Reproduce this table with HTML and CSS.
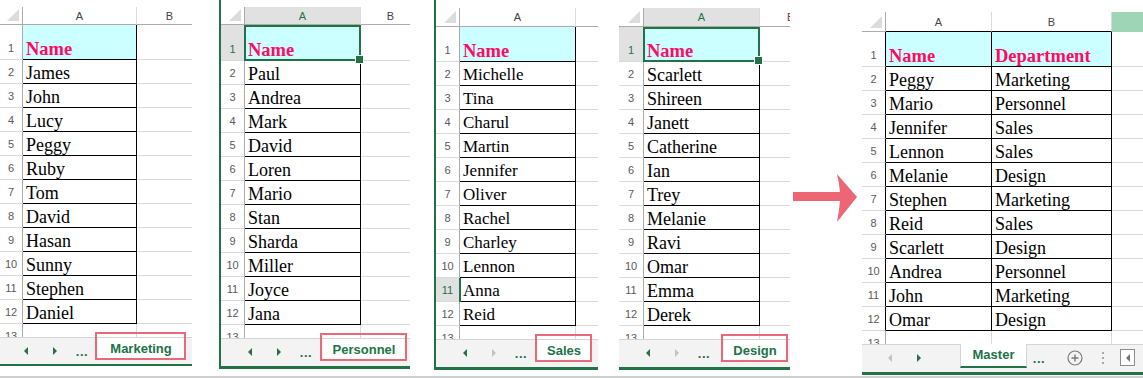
FILE: index.html
```html
<!DOCTYPE html>
<html>
<head>
<meta charset="utf-8">
<link rel="stylesheet" href="styles.css">
</head>
<body>
<div class="stage">

  <div class="sheet p1">
    <div class="row hdr"><div class="rh corner"><span class="tri"></span></div><div class="cell ca">A</div><div class="cell cb bl">B</div></div>
    <div class="row r1"><div class="rh">1</div><div class="cell ca dat">Name</div><div class="cell cb"></div></div>
    <div class="row"><div class="rh">2</div><div class="cell ca dat">James</div><div class="cell cb"></div></div>
    <div class="row"><div class="rh">3</div><div class="cell ca dat">John</div><div class="cell cb"></div></div>
    <div class="row"><div class="rh">4</div><div class="cell ca dat">Lucy</div><div class="cell cb"></div></div>
    <div class="row"><div class="rh">5</div><div class="cell ca dat">Peggy</div><div class="cell cb"></div></div>
    <div class="row"><div class="rh">6</div><div class="cell ca dat">Ruby</div><div class="cell cb"></div></div>
    <div class="row"><div class="rh">7</div><div class="cell ca dat">Tom</div><div class="cell cb"></div></div>
    <div class="row"><div class="rh">8</div><div class="cell ca dat">David</div><div class="cell cb"></div></div>
    <div class="row"><div class="rh">9</div><div class="cell ca dat">Hasan</div><div class="cell cb"></div></div>
    <div class="row"><div class="rh">10</div><div class="cell ca dat">Sunny</div><div class="cell cb"></div></div>
    <div class="row"><div class="rh">11</div><div class="cell ca dat">Stephen</div><div class="cell cb"></div></div>
    <div class="row"><div class="rh">12</div><div class="cell ca dat">Daniel</div><div class="cell cb"></div></div>
    <div class="row r13"><div class="rh">13</div><div class="cell ca"></div><div class="cell cb"></div></div>
    <div class="tabs">
      <span class="nav"><i class="tl"></i></span>
      <span class="nav"><i class="tr"></i></span>
      <span class="dots">...</span>
      <span class="tab hl t-mkt">Marketing</span>
    </div>
  </div>

  <div class="sheet p2">
    <div class="row hdr"><div class="rh corner"><span class="tri"></span></div><div class="cell ca sel">A</div><div class="cell cb bl">B</div></div>
    <div class="row r1"><div class="rh sel">1</div><div class="cell ca dat active">Name</div><div class="cell cb"></div></div>
    <div class="row"><div class="rh">2</div><div class="cell ca dat">Paul</div><div class="cell cb"></div></div>
    <div class="row"><div class="rh">3</div><div class="cell ca dat">Andrea</div><div class="cell cb"></div></div>
    <div class="row"><div class="rh">4</div><div class="cell ca dat">Mark</div><div class="cell cb"></div></div>
    <div class="row"><div class="rh">5</div><div class="cell ca dat">David</div><div class="cell cb"></div></div>
    <div class="row"><div class="rh">6</div><div class="cell ca dat">Loren</div><div class="cell cb"></div></div>
    <div class="row"><div class="rh">7</div><div class="cell ca dat">Mario</div><div class="cell cb"></div></div>
    <div class="row"><div class="rh">8</div><div class="cell ca dat">Stan</div><div class="cell cb"></div></div>
    <div class="row"><div class="rh">9</div><div class="cell ca dat">Sharda</div><div class="cell cb"></div></div>
    <div class="row"><div class="rh">10</div><div class="cell ca dat">Miller</div><div class="cell cb"></div></div>
    <div class="row"><div class="rh">11</div><div class="cell ca dat">Joyce</div><div class="cell cb"></div></div>
    <div class="row"><div class="rh">12</div><div class="cell ca dat">Jana</div><div class="cell cb"></div></div>
    <div class="row r13"><div class="rh">13</div><div class="cell ca"></div><div class="cell cb"></div></div>
    <div class="tabs">
      <span class="nav"><i class="tl"></i></span>
      <span class="nav"><i class="tr"></i></span>
      <span class="dots">...</span>
      <span class="tab hl t-per">Personnel</span>
    </div>
  </div>

  <div class="sheet p3">
    <div class="row hdr"><div class="rh corner"><span class="tri"></span></div><div class="cell ca">A</div><div class="cell cb"></div></div>
    <div class="row r1"><div class="rh">1</div><div class="cell ca dat">Name</div><div class="cell cb"></div></div>
    <div class="row"><div class="rh">2</div><div class="cell ca dat">Michelle</div><div class="cell cb"></div></div>
    <div class="row"><div class="rh">3</div><div class="cell ca dat">Tina</div><div class="cell cb"></div></div>
    <div class="row"><div class="rh">4</div><div class="cell ca dat">Charul</div><div class="cell cb"></div></div>
    <div class="row"><div class="rh">5</div><div class="cell ca dat">Martin</div><div class="cell cb"></div></div>
    <div class="row"><div class="rh">6</div><div class="cell ca dat">Jennifer</div><div class="cell cb"></div></div>
    <div class="row"><div class="rh">7</div><div class="cell ca dat">Oliver</div><div class="cell cb"></div></div>
    <div class="row"><div class="rh">8</div><div class="cell ca dat">Rachel</div><div class="cell cb"></div></div>
    <div class="row"><div class="rh">9</div><div class="cell ca dat">Charley</div><div class="cell cb"></div></div>
    <div class="row"><div class="rh">10</div><div class="cell ca dat">Lennon</div><div class="cell cb"></div></div>
    <div class="row"><div class="rh sel">11</div><div class="cell ca dat edge">Anna</div><div class="cell cb"></div></div>
    <div class="row"><div class="rh">12</div><div class="cell ca dat">Reid</div><div class="cell cb"></div></div>
    <div class="row r13"><div class="rh">13</div><div class="cell ca"></div><div class="cell cb"></div></div>
    <div class="tabs">
      <span class="nav"><i class="tl"></i></span>
      <span class="nav"><i class="tr off"></i></span>
      <span class="dots">...</span>
      <span class="tab hl t-sal">Sales</span>
    </div>
  </div>

  <div class="sheet p4">
    <div class="row hdr"><div class="rh corner"><span class="tri"></span></div><div class="cell ca sel">A</div><div class="cell cb cut">B</div></div>
    <div class="row r1"><div class="rh sel">1</div><div class="cell ca dat active">Name</div><div class="cell cb"></div></div>
    <div class="row"><div class="rh">2</div><div class="cell ca dat">Scarlett</div><div class="cell cb"></div></div>
    <div class="row"><div class="rh">3</div><div class="cell ca dat">Shireen</div><div class="cell cb"></div></div>
    <div class="row"><div class="rh">4</div><div class="cell ca dat">Janett</div><div class="cell cb"></div></div>
    <div class="row"><div class="rh">5</div><div class="cell ca dat">Catherine</div><div class="cell cb"></div></div>
    <div class="row"><div class="rh">6</div><div class="cell ca dat">Ian</div><div class="cell cb"></div></div>
    <div class="row"><div class="rh">7</div><div class="cell ca dat">Trey</div><div class="cell cb"></div></div>
    <div class="row"><div class="rh">8</div><div class="cell ca dat">Melanie</div><div class="cell cb"></div></div>
    <div class="row"><div class="rh">9</div><div class="cell ca dat">Ravi</div><div class="cell cb"></div></div>
    <div class="row"><div class="rh">10</div><div class="cell ca dat">Omar</div><div class="cell cb"></div></div>
    <div class="row"><div class="rh">11</div><div class="cell ca dat">Emma</div><div class="cell cb"></div></div>
    <div class="row"><div class="rh">12</div><div class="cell ca dat">Derek</div><div class="cell cb"></div></div>
    <div class="row r13"><div class="rh">13</div><div class="cell ca"></div><div class="cell cb"></div></div>
    <div class="tabs">
      <span class="nav"><i class="tl"></i></span>
      <span class="nav"><i class="tr off"></i></span>
      <span class="dots">...</span>
      <span class="tab hl t-des">Design</span>
    </div>
  </div>

  <div class="arrow">
    <svg width="64" height="52" viewBox="0 0 64 52" aria-hidden="true">
      <path d="M0 20 H47 Q46 10 44 2 L64 25 L44 50 Q46 40 47 29 H0 Z" fill="#ec6676"/>
    </svg>
  </div>

  <div class="sheet p5">
    <div class="row hdr"><div class="rh corner"><span class="tri"></span></div><div class="cell ca">A</div><div class="cell cb">B</div><div class="cell cc"></div></div>
    <div class="row r1"><div class="rh">1</div><div class="cell ca dat">Name</div><div class="cell cb dat">Department</div><div class="cell cc"></div></div>
    <div class="row"><div class="rh">2</div><div class="cell ca dat">Peggy</div><div class="cell cb dat">Marketing</div><div class="cell cc"></div></div>
    <div class="row"><div class="rh">3</div><div class="cell ca dat">Mario</div><div class="cell cb dat">Personnel</div><div class="cell cc"></div></div>
    <div class="row"><div class="rh">4</div><div class="cell ca dat">Jennifer</div><div class="cell cb dat">Sales</div><div class="cell cc"></div></div>
    <div class="row"><div class="rh">5</div><div class="cell ca dat">Lennon</div><div class="cell cb dat">Sales</div><div class="cell cc"></div></div>
    <div class="row"><div class="rh">6</div><div class="cell ca dat">Melanie</div><div class="cell cb dat">Design</div><div class="cell cc"></div></div>
    <div class="row"><div class="rh">7</div><div class="cell ca dat">Stephen</div><div class="cell cb dat">Marketing</div><div class="cell cc"></div></div>
    <div class="row"><div class="rh">8</div><div class="cell ca dat">Reid</div><div class="cell cb dat">Sales</div><div class="cell cc"></div></div>
    <div class="row"><div class="rh">9</div><div class="cell ca dat">Scarlett</div><div class="cell cb dat">Design</div><div class="cell cc"></div></div>
    <div class="row"><div class="rh">10</div><div class="cell ca dat">Andrea</div><div class="cell cb dat">Personnel</div><div class="cell cc"></div></div>
    <div class="row"><div class="rh">11</div><div class="cell ca dat">John</div><div class="cell cb dat">Marketing</div><div class="cell cc"></div></div>
    <div class="row"><div class="rh">12</div><div class="cell ca dat">Omar</div><div class="cell cb dat">Design</div><div class="cell cc"></div></div>
    <div class="row r13"><div class="rh">13</div><div class="cell ca"></div><div class="cell cb"></div><div class="cell cc"></div></div>
    <div class="tabs">
      <span class="nav"><i class="tl off"></i></span>
      <span class="nav"><i class="tr"></i></span>
      <span class="tab t-mas">Master</span>
      <span class="dots">...</span>
      <span class="plus">
        <svg width="16" height="16" viewBox="0 0 16 16" aria-hidden="true">
          <circle cx="8" cy="8" r="7" fill="none" stroke="#7a7a7a" stroke-width="1.2"/>
          <path d="M8 4.5 V11.5 M4.5 8 H11.5" stroke="#7a7a7a" stroke-width="1.4"/>
        </svg>
      </span>
      <span class="vdots"><i></i><i></i><i></i></span>
      <span class="scrollbox"><i class="tl grey"></i></span>
    </div>
  </div>

</div>
</body>
</html>
```

FILE: styles.css
```css
* { box-sizing: border-box; margin: 0; padding: 0; }
html, body { background: #fff; }
body {
  width: 1143px;
  height: 378px;
  overflow: hidden;
  font-family: "Liberation Sans", Arial, sans-serif;
}

.stage {
  display: flex;
  align-items: flex-start;
  height: 378px;
  border-bottom: 2px solid #cfcfcf;
}

.sheet { display: flex; flex-direction: column; flex: none; }

.p1 { --rh: 23px; --a: 114px; --b: 55px; width: 192px; padding-top: 7px; }
.p2 { --rh: 24px; --a: 116px; --b: 49px; width: 191px; margin-left: 27px; padding-top: 7px; border-left: 2px solid #217346; }
.p3 { --rh: 24px; --a: 116px; --b: 22px; width: 164px; margin-left: 24px; padding-top: 8px; border-left: 2px solid #217346; }
.p4 { --rh: 25px; --a: 116px; --b: 30px; width: 171px; margin-left: 21px; padding-top: 8px; }
.p5 { --rh: 24px; --a: 106px; --b: 120px; --c: 31px; width: 281px; padding-top: 12px; }

/* rows and cells */
.row { display: flex; height: 24px; flex: none; }
.rh {
  width: var(--rh);
  flex: none;
  border-right: 1px solid #ababab;
  border-bottom: 1px solid #dadada;
  display: flex;
  align-items: flex-end;
  justify-content: center;
  padding-bottom: 4px;
  font-size: 11px;
  line-height: 13px;
  color: #5a5a5a;
}
.cell { flex: none; border-right: 1px solid #dadada; border-bottom: 1px solid #dadada; }
.row > .cell:last-child { border-right: none; }
.ca { width: var(--a); }
.cb { width: var(--b); }
.cc { width: var(--c); }

.dat {
  border-right-color: #000;
  border-bottom-color: #000;
  font-family: "Liberation Serif", "Times New Roman", serif;
  font-size: 18px;
  line-height: 20px;
  color: #000;
  padding-left: 3px;
  display: flex;
  align-items: flex-end;
  white-space: nowrap;
}
.row > .cell.dat:last-child { border-right: 1px solid #000; }
.p3 .dat { font-size: 17px; }

.r1 { height: 35px; }
.p2 .r1 { height: 36px; }
.r1 .dat {
  background: #ccffff;
  color: #ff0a64;
  font-weight: bold;
  font-size: 18.5px;
}

/* column header row */
.hdr { height: 18px; }
.p3 .hdr, .p4 .hdr { height: 19px; }
.p5 .hdr { height: 20px; }
.hdr .rh, .hdr .cell { border-bottom-color: #ababab; }
.hdr .cell {
  display: flex;
  align-items: center;
  justify-content: center;
  font-size: 11px;
  color: #444;
}
.hdr .bl { padding-left: 10px; }
.hdr .cut {
  justify-content: flex-start;
  padding-left: 27px;
  overflow: hidden;
  color: #8a2e2e;
}
.corner { justify-content: flex-end; padding: 0 3px 3px 0; }
.tri {
  width: 0;
  height: 0;
  border-left: 12px solid transparent;
  border-bottom: 12px solid #dcdcdc;
}
.p5 .hdr .ca, .p5 .hdr .cb { border-bottom-color: #000; }
.p5 .hdr .cc { background: #9fd5b7; border-bottom-color: #9fd5b7; }
.p5 .row:not(.hdr):not(.r13) .rh { border-right-color: #000; }

/* selection */
.sel { background: #e1e1e1; color: #217346 !important; }
.active { position: relative; z-index: 2; }
.active::after {
  content: "";
  position: absolute;
  left: -1px; top: 0; right: -1px; bottom: -1px;
  border: 2px solid #217346;
}
.active::before {
  content: "";
  position: absolute;
  right: -4px; bottom: -4px;
  width: 7px; height: 7px;
  background: #217346;
  border: 1px solid #fff;
  z-index: 3;
}
.edge { position: relative; }
.edge::after {
  content: "";
  position: absolute;
  left: -1px; top: 0; bottom: -1px;
  width: 2px;
  background: #217346;
}

/* partial row 13 */
.r13 { height: 13px; overflow: hidden; align-items: flex-start; }
.r13 > div { height: 24px; }

/* sheet tab bar */
.tabs {
  flex: none;
  display: flex;
  align-items: flex-start;
  background: #f3f3f3;
  border-top: 1px solid #d4d4d4;
  border-bottom: 3px solid #217346;
  height: 31px;
  padding-left: 14px;
}
.p1 .tabs { height: 29px; border-bottom-width: 2px; padding-left: 11px; }
.p3 .tabs, .p4 .tabs { height: 31px; }

.nav { width: 29px; height: 26px; display: flex; align-items: center; justify-content: center; flex: none; }
.tl, .tr { display: block; width: 0; height: 0; border-top: 4px solid transparent; border-bottom: 4px solid transparent; }
.tl { border-right: 4px solid #217346; }
.tr { border-left: 4px solid #217346; }
.tl.off { border-right-color: #c3c3c3; }
.tr.off { border-left-color: #c3c3c3; }
.tl.grey { border-right-color: #777; }

.dots {
  width: 26px;
  height: 26px;
  flex: none;
  display: flex;
  align-items: center;
  justify-content: center;
  color: #217346;
  font-weight: bold;
  font-size: 13px;
  letter-spacing: 0.5px;
}

.tab {
  flex: none;
  height: 22px;
  margin-left: 4px;
  background: #fff;
  border-bottom: 2px solid #217346;
  color: #217346;
  font-weight: bold;
  font-size: 13px;
  display: flex;
  align-items: center;
  justify-content: center;
  position: relative;
}
.hl::after {
  content: "";
  position: absolute;
  left: -3px; right: -2px; top: -6px; bottom: -2px;
  border: 2px solid #e8697a;
}
.t-mkt { width: 86px; margin-left: 3px; }
.t-per { width: 82px; }
.t-sal { width: 52px; }
.t-des { width: 62px; margin-left: 7px; }

/* master tab bar */
.p5 .tabs { padding-left: 13px; }
.t-mas {
  width: 67px;
  height: 24px;
  margin-top: -1px;
  margin-left: 27px;
  border-left: 1px solid #d4d4d4;
  border-right: 1px solid #d4d4d4;
  padding-bottom: 1px;
}
.p5 .dots { width: 24px; margin-left: 0; }
.plus { width: 24px; height: 26px; margin-left: 12px; display: flex; align-items: center; justify-content: center; flex: none; }
.vdots { width: 16px; height: 26px; margin-left: 8px; display: flex; flex-direction: column; align-items: center; justify-content: center; gap: 3px; flex: none; }
.vdots i { display: block; width: 2px; height: 2px; background: #a8a8a8; }
.scrollbox {
  width: 15px;
  height: 17px;
  margin: 4px 0 0 9px;
  border: 1px solid #8c8c8c;
  background: #fff;
  display: flex;
  align-items: center;
  justify-content: center;
  flex: none;
}

.arrow { width: 72px; flex: none; padding: 172px 0 0 3px; }
.arrow svg { display: block; }
```
